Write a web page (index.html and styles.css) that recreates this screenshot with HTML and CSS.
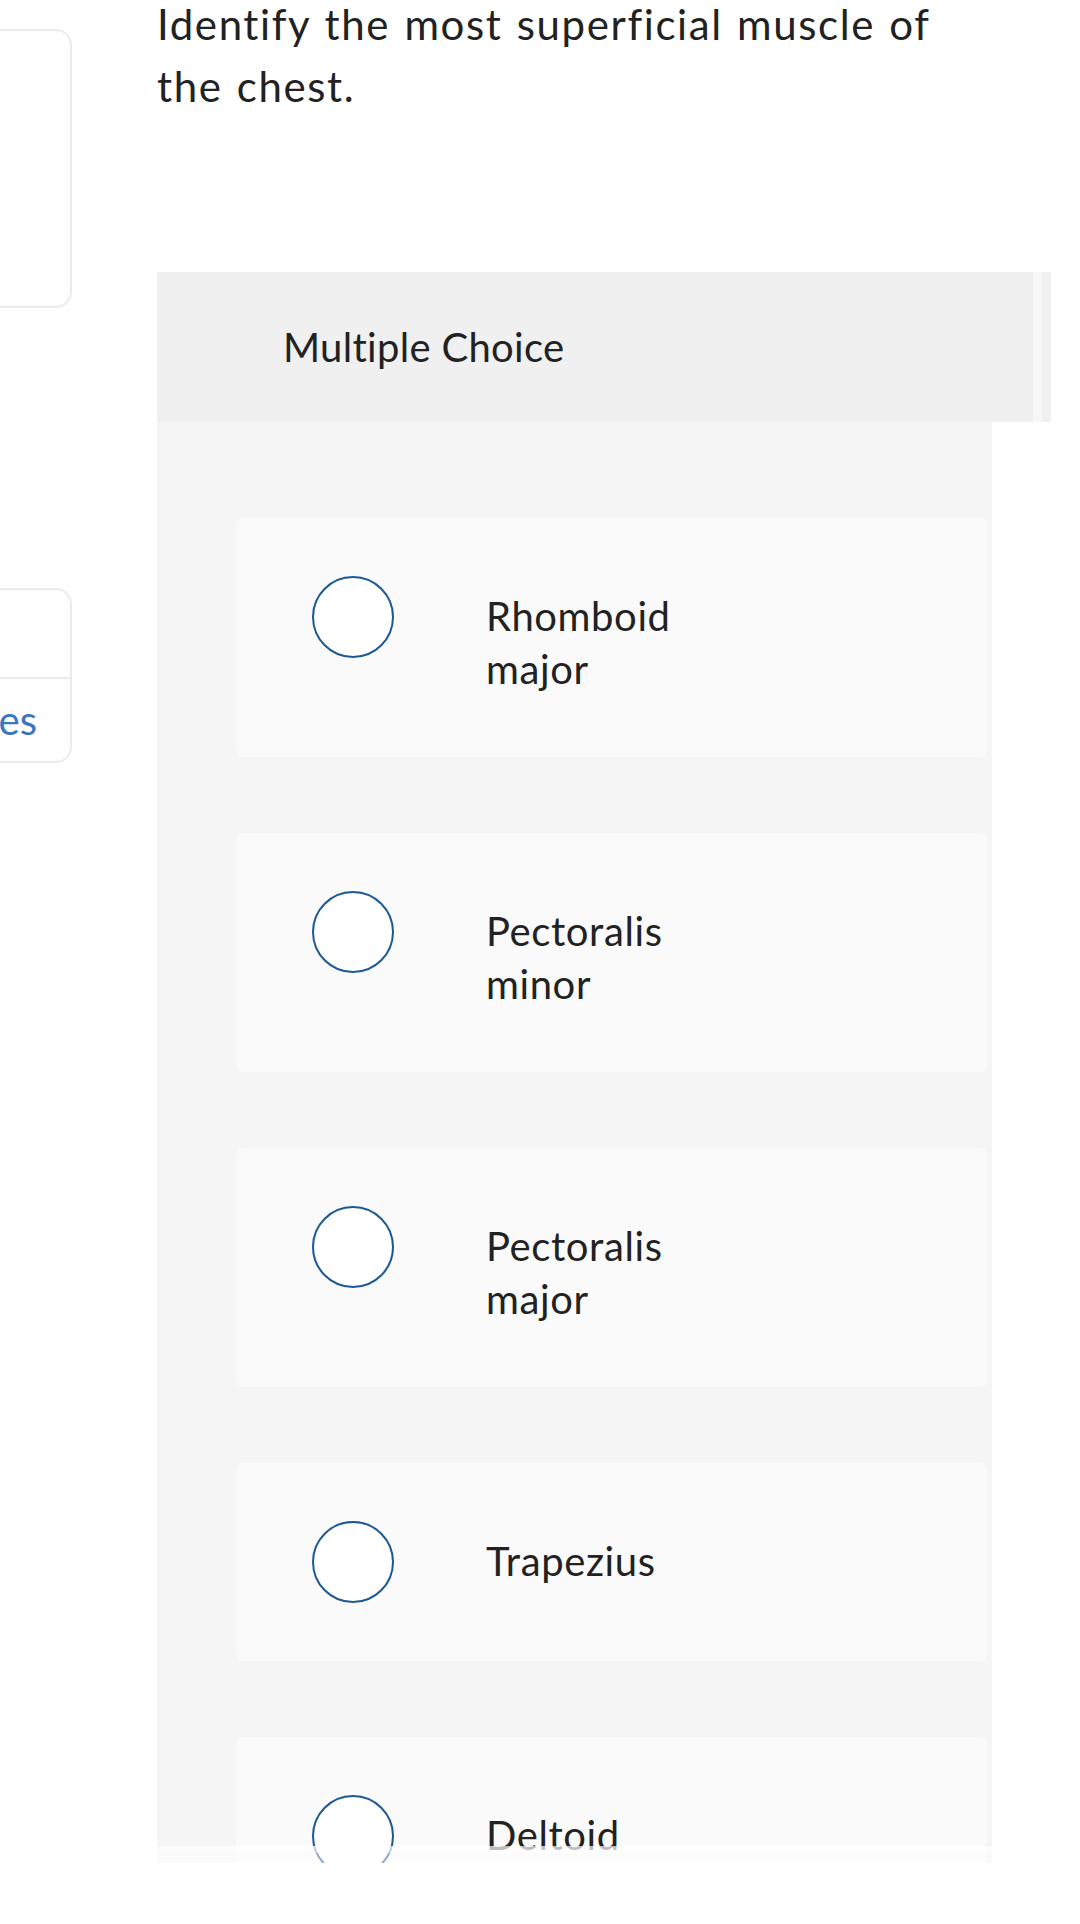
FILE: index.html
```html
<!DOCTYPE html>
<html lang="en">
<head>
<meta charset="utf-8">
<title>Multiple Choice</title>
<link rel="stylesheet" href="styles.css">
</head>
<body>
<div class="page">
  <aside class="side">
    <div class="side-card side-card-top"></div>
    <div class="side-card side-card-links">
      <div class="side-row"></div>
      <div class="side-row side-link">Resources</div>
    </div>
  </aside>
  <main class="main">
    <p class="question">Identify the most superficial muscle of the chest.</p>
    <div class="qtype">Multiple Choice</div>
    <div class="choices">
      <div class="choice"><span class="radio"></span><span class="choice-text">Rhomboid major</span></div>
      <div class="choice"><span class="radio"></span><span class="choice-text">Pectoralis minor</span></div>
      <div class="choice"><span class="radio"></span><span class="choice-text">Pectoralis major</span></div>
      <div class="choice"><span class="radio"></span><span class="choice-text">Trapezius</span></div>
      <div class="choice"><span class="radio"></span><span class="choice-text">Deltoid</span></div>
      <div class="fade"></div>
    </div>
  </main>
</div>
</body>
</html>
```
FILE: styles.css
```css
html, body {
  margin: 0;
  padding: 0;
  background: #ffffff;
}
body {
  width: 1080px;
  height: 1924px;
  overflow: hidden;
  font-family: "Lato", "Open Sans", sans-serif;
  color: #222222;
}
.page {
  display: flex;
  align-items: flex-start;
}
.side {
  width: 72px;
  flex-shrink: 0;
  margin-right: 85px;
}
.side-card {
  box-sizing: border-box;
  width: 260px;
  margin-left: -188px;
  border: 2px solid #ebebeb;
  border-radius: 16px;
  background: #ffffff;
}
.side-card-top {
  margin-top: 29px;
  height: 279px;
}
.side-card-links {
  margin-top: 280px;
  height: 175px;
  display: flex;
  flex-direction: column;
}
.side-row {
  height: 87px;
  box-sizing: border-box;
}
.side-row + .side-row {
  border-top: 2px solid #ebebeb;
  flex: 1;
}
.side-link {
  display: flex;
  align-items: center;
  justify-content: flex-end;
  padding-right: 33px;
  font-size: 40px;
  color: #3a76c0;
}
.main {
  width: 894px;
  flex-shrink: 0;
}
.question {
  margin: -7px 0 0 0;
  font-size: 42px;
  line-height: 62px;
  letter-spacing: 1.6px;
  word-spacing: 2px;
  padding-right: 60px;
}
.qtype {
  margin-top: 155px;
  height: 150px;
  box-sizing: border-box;
  padding-left: 126px;
  display: flex;
  align-items: center;
  font-size: 40px;
  letter-spacing: 0.3px;
  background: linear-gradient(to right, #f0f0f0 0, #f0f0f0 876px, #f7f7f7 876px, #f7f7f7 885px, #f0f0f0 885px);
}
.choices {
  position: relative;
  width: 835px;
  height: 1441px;
  box-sizing: border-box;
  padding: 96px 5px 0 79px;
  background: #f5f5f5;
  overflow: hidden;
  display: flex;
  flex-direction: column;
  gap: 76px;
}
.choice {
  flex-shrink: 0;
  display: flex;
  align-items: flex-start;
  padding: 58px 20px 58px 76px;
  background: #fafafa;
  border-radius: 6px;
}
.radio {
  width: 82px;
  height: 82px;
  box-sizing: border-box;
  border: 2.5px solid #1c5994;
  border-radius: 50%;
  background: #ffffff;
  flex-shrink: 0;
}
.choice-text {
  margin: 14px 0 3px 92px;
  width: 240px;
  font-size: 40px;
  line-height: 53px;
  letter-spacing: 0.6px;
}
.fade {
  position: absolute;
  left: 0;
  right: 0;
  bottom: 0;
  height: 17px;
  background: linear-gradient(to bottom, rgba(255,255,255,0.7) 0, rgba(255,255,255,0.7) 7px, rgba(255,255,255,0.5) 7px, rgba(255,255,255,0.5) 17px);
}
```
